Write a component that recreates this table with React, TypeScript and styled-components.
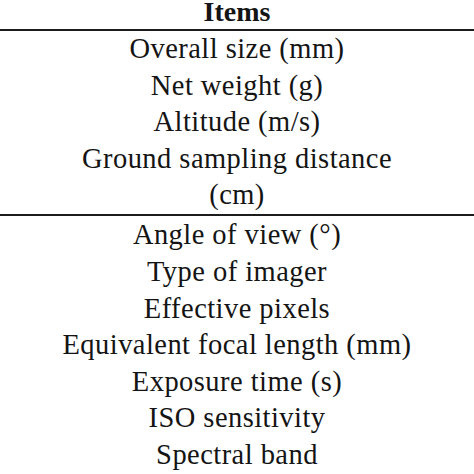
import React from "react";
import styled, { createGlobalStyle } from "styled-components";

const Global = createGlobalStyle`
  html, body { margin: 0; padding: 0; background: #ffffff; }
  body { font-family: "Liberation Serif", "DejaVu Serif", serif; color: #141414; }
`;

const Table = styled.div`
  width: 474px;
  height: 474px;
  overflow: hidden;
  display: flex;
  flex-direction: column;
  background: #ffffff;
`;

const Head = styled.div`
  font-weight: bold;
  font-size: 28px;
  line-height: 24px;
  text-align: center;
  padding: 0 0 4.5px;
  border-bottom: 2px solid #1c1c1c;
`;

const Group = styled.div<{ $top: number; $divider?: boolean }>`
  display: flex;
  flex-direction: column;
  padding-top: ${(p) => p.$top}px;
  ${(p) => (p.$divider ? "border-top: 2px solid #1c1c1c;" : "")}
`;

const Cell = styled.div`
  font-size: 28.5px;
  line-height: 36.6px;
  letter-spacing: 0.45px;
  text-align: center;
  padding: 0 57px;
`;

const groupOne = [
  "Overall size (mm)",
  "Net weight (g)",
  "Altitude (m/s)",
  "Ground sampling distance (cm)",
];

const groupTwo = [
  "Angle of view (°)",
  "Type of imager",
  "Effective pixels",
  "Equivalent focal length (mm)",
  "Exposure time (s)",
  "ISO sensitivity",
  "Spectral band",
];

export default function App() {
  return (
    <>
      <Global />
      <Table>
        <Head>Items</Head>
        <Group $top={0.5}>
          {groupOne.map((t) => (
            <Cell key={t}>{t}</Cell>
          ))}
        </Group>
        <Group $top={1.5} $divider>
          {groupTwo.map((t) => (
            <Cell key={t}>{t}</Cell>
          ))}
        </Group>
      </Table>
    </>
  );
}
